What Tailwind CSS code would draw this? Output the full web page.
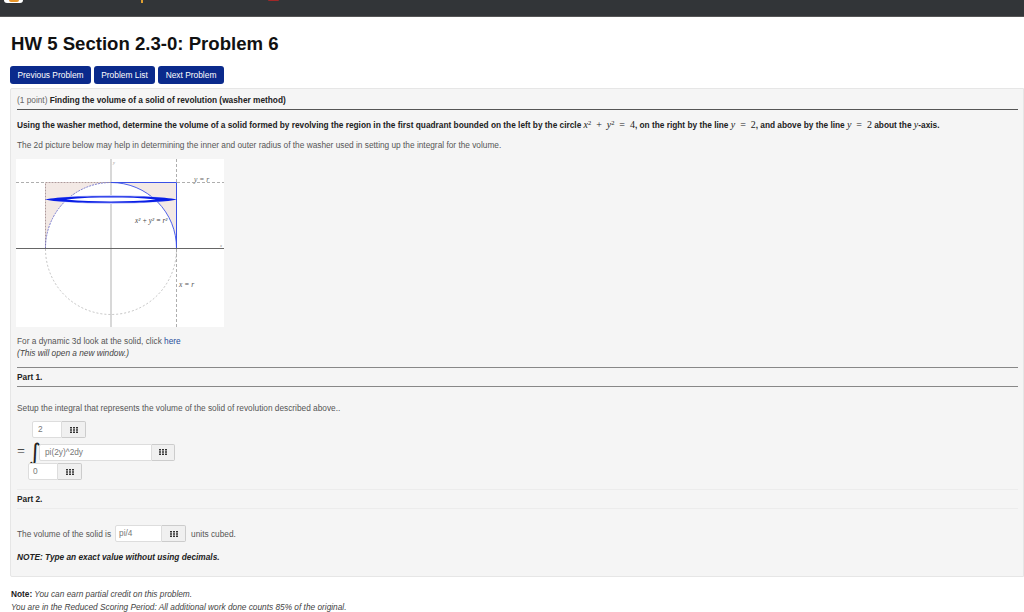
<!DOCTYPE html>
<html lang="en">
<head>
  <meta charset="UTF-8" />
  <title>HW 5 Section 2.3-0: Problem 6</title>
  <script src="https://cdn.jsdelivr.net/npm/@tailwindcss/browser@4"></script>
</head>
<body class="bg-white h-[612px] overflow-hidden font-['Liberation_Sans',Arial,sans-serif] text-[8.3px] leading-[12px] text-[#333]">
  <!-- Top bar -->
  <header class="relative h-[17px] bg-[#323538] border-b border-[#555]">
    <div class="absolute left-[4px] top-0 w-[19px] h-[3px] bg-white rounded-b-[5px]"><div class="mx-auto w-[10px] h-[2px] bg-[#e8962a] rounded-b-[4px]"></div></div>
    <div class="absolute left-[141px] top-0 w-[2px] h-[3px] bg-[#e0a030]"></div>
    <div class="absolute left-[268px] top-0 w-[11px] h-px bg-[#a02828] rounded-b"></div>
  </header>

  <main class="pl-[10px]">
    <h1 class="pt-[17px] pl-px text-[18.6px] leading-[20px] font-bold text-[#111]">HW 5 Section 2.3-0: Problem 6</h1>

    <nav class="mt-[12px] flex gap-[3px] text-white text-[8.4px]">
      <a class="flex items-center justify-center w-[81px] h-[18px] rounded-[3px] bg-[#0a2a8c]">Previous Problem</a>
      <a class="flex items-center justify-center w-[61px] h-[18px] rounded-[3px] bg-[#0a2a8c]">Problem List</a>
      <a class="flex items-center justify-center w-[66px] h-[18px] rounded-[3px] bg-[#0a2a8c]">Next Problem</a>
    </nav>

    <!-- Problem panel -->
    <section class="mt-[4px] h-[489px] bg-[#f5f5f5] border border-[#e6e6e6] rounded-l-[2px] pl-[6px] pr-[5px]">
      <div class="pt-[5px] h-[21px] border-b border-[#555] text-[#666]">(1 point) <b class="text-[#222]">Finding the volume of a solid of revolution (washer method)</b></div>

      <p class="mt-[9px] h-[12px] font-bold text-[#222] whitespace-nowrap">Using the washer method, determine the volume of a solid formed by revolving the region in the first quadrant bounded on the left by the circle <span class="font-['Liberation_Serif',serif] font-normal text-[10px] [word-spacing:2.4px]"><i>x</i><sup class="text-[6.5px]">2</sup> + <i>y</i><sup class="text-[6.5px]">2</sup> = 4</span>, on the right by the line <span class="font-['Liberation_Serif',serif] font-normal text-[10px] [word-spacing:2.4px]"><i>y</i> = 2</span>, and above by the line <span class="font-['Liberation_Serif',serif] font-normal text-[10px] [word-spacing:2.4px]"><i>y</i> = 2</span> about the <i class="font-['Liberation_Serif',serif] font-normal text-[10px]">y</i>-axis.</p>

      <p class="mt-[8px] text-[#555]">The 2d picture below may help in determining the inner and outer radius of the washer used in setting up the integral for the volume.</p>

      <!-- Washer diagram -->
      <svg class="mt-[8px] -ml-px block bg-white" width="208" height="168" viewBox="0 0 208 168">
        <path d="M29.5 23.5 H160.5 V89.5 A65.5 65.5 0 0 0 95 23.5 A65.5 65.5 0 0 0 29.5 89.5 Z" fill="#f3e9e5" />
        <path d="M95 0 V168" stroke="#d8d8d8" stroke-width="2" />
        <path d="M0 23.5 H29 M161 23.5 H208" stroke="#999" stroke-width="0.8" stroke-dasharray="3 2" fill="none" />
        <path d="M160.5 0 V24 M160.5 90 V168" stroke="#999" stroke-width="0.8" stroke-dasharray="3 2" fill="none" />
        <path d="M29.5 90 A65.5 65.5 0 0 0 160.5 90" stroke="#aaa" stroke-width="0.7" stroke-dasharray="2 2" fill="none" />
        <path d="M29.5 89.5 V23.5 H95" stroke="#a58f90" stroke-width="0.9" stroke-dasharray="2 1" fill="none" />
        <path d="M95 23.5 H160.5 V89.5" stroke="#3b50e6" stroke-width="1" fill="none" />
        <path d="M29.5 89.5 A65.5 65.5 0 0 1 95 23.5" stroke="#5a60c8" stroke-width="0.8" stroke-dasharray="2 1" fill="none" />
        <path d="M95 23.5 A65.5 65.5 0 0 1 160.5 89.5" stroke="#3b50e6" stroke-width="0.9" fill="none" />
        <path d="M0 89.5 H208" stroke="#666" stroke-width="1" />
        <!-- washer: thick ends, thin white lens in the middle -->
        <ellipse cx="95" cy="40.5" rx="58" ry="4.4" fill="#c9cdfb" />
        <path d="M29 40.5 C42 37.5 70 37.2 95 37.2 C120 37.2 148 37.5 161 40.5 C148 43.5 120 43.8 95 43.8 C70 43.8 42 43.5 29 40.5 Z" fill="#0a1fe6" />
        <path d="M50 40.5 C65 38.9 80 38.6 95 38.6 C110 38.6 125 38.9 140 40.5 C125 42.1 110 42.4 95 42.4 C80 42.4 65 42.1 50 40.5 Z" fill="#fff" />
        <text x="119" y="64" font-family="Liberation Serif, serif" font-style="italic" font-size="7.2" fill="#444">x² + y² = r²</text>
        <text x="178" y="23" font-family="Liberation Serif, serif" font-style="italic" font-size="7.5" fill="#666">y = r</text>
        <text x="163" y="128" font-family="Liberation Serif, serif" font-style="italic" font-size="7.5" fill="#555">x = r</text>
        <text x="204" y="88" font-family="Liberation Serif, serif" font-style="italic" font-size="4.5" fill="#888">x</text>
        <text x="97" y="5" font-family="Liberation Serif, serif" font-style="italic" font-size="4.5" fill="#888">y</text>
      </svg>

      <p class="mt-[8px] text-[#555]">For a dynamic 3d look at the solid, click <a class="text-[#1f4e9c]">here</a></p>
      <p class="italic text-[#444]">(This will open a new window.)</p>

      <div class="mt-[8px] h-[20px] border-y border-[#888] pt-[3px] font-bold text-[#222]">Part 1.</div>

      <p class="mt-[15px] text-[#555]">Setup the integral that represents the volume of the solid of revolution described above..</p>

      <!-- Integral with limits -->
      <div class="mt-[7px] flex flex-col w-[170px] h-[62px] text-[#777]">
        <div class="ml-[15px] flex h-[17px]">
          <span class="w-[30px] pl-[5px] bg-white border border-[#ddd] rounded-l-[2px] leading-[15px]">2</span>
          <span class="w-[24px] flex items-center justify-center bg-[#f0f0f0] border border-l-0 border-[#ccc] rounded-r-[2px]"><svg width="8" height="6" viewBox="0 0 8 6" fill="#333"><path d="M0 0h2v1.5H0zM3 0h2v1.5H3zM6 0h2v1.5H6zM0 2.2h2v1.5H0zM3 2.2h2v1.5H3zM6 2.2h2v1.5H6zM0 4.4h2V6H0zM3 4.4h2V6H3zM6 4.4h2V6H6z" /></svg></span>
        </div>
        <div class="flex items-center h-[20px] mt-[4px]">
          <span class="w-[12px] font-['Liberation_Serif',serif] text-[14px] text-[#222]">=</span>
          <span class="w-[10px] font-['DejaVu_Sans',sans-serif] italic text-[23px] leading-[20px] text-[#222]">∫</span>
          <div class="flex h-[17px]">
            <span class="w-[113px] pl-[5px] bg-white border border-[#ddd] rounded-l-[2px] leading-[15px]">pi(2y)^2dy</span>
            <span class="w-[23px] flex items-center justify-center bg-[#f0f0f0] border border-l-0 border-[#ccc] rounded-r-[2px]"><svg width="8" height="6" viewBox="0 0 8 6" fill="#333"><path d="M0 0h2v1.5H0zM3 0h2v1.5H3zM6 0h2v1.5H6zM0 2.2h2v1.5H0zM3 2.2h2v1.5H3zM6 2.2h2v1.5H6zM0 4.4h2V6H0zM3 4.4h2V6H3zM6 4.4h2V6H6z" /></svg></span>
          </div>
        </div>
        <div class="ml-[11px] mt-px flex h-[17px]">
          <span class="w-[30px] pl-[4px] bg-white border border-[#ddd] rounded-l-[2px] leading-[15px]">0</span>
          <span class="w-[24px] flex items-center justify-center bg-[#f0f0f0] border border-l-0 border-[#ccc] rounded-r-[2px]"><svg width="8" height="6" viewBox="0 0 8 6" fill="#333"><path d="M0 0h2v1.5H0zM3 0h2v1.5H3zM6 0h2v1.5H6zM0 2.2h2v1.5H0zM3 2.2h2v1.5H3zM6 2.2h2v1.5H6zM0 4.4h2V6H0zM3 4.4h2V6H3zM6 4.4h2V6H6z" /></svg></span>
        </div>
      </div>

      <div class="mt-[6px] h-[20px] border-y border-[#ececec] pt-[3px] font-bold text-[#222]">Part 2.</div>

      <div class="mt-[16px] flex items-center h-[17px] text-[#555]">
        <span class="mr-[4px]">The volume of the solid is</span>
        <span class="w-[47px] h-[17px] pl-[3px] bg-white border border-[#ddd] rounded-l-[2px] leading-[15px] text-[#777]">pi/4</span>
        <span class="w-[24px] h-[17px] flex items-center justify-center bg-[#f0f0f0] border border-l-0 border-[#ccc] rounded-r-[2px]"><svg width="8" height="6" viewBox="0 0 8 6" fill="#333"><path d="M0 0h2v1.5H0zM3 0h2v1.5H3zM6 0h2v1.5H6zM0 2.2h2v1.5H0zM3 2.2h2v1.5H3zM6 2.2h2v1.5H6zM0 4.4h2V6H0zM3 4.4h2V6H3zM6 4.4h2V6H6z" /></svg></span>
        <span class="ml-[5px]">units cubed.</span>
      </div>

      <p class="mt-[9px] font-bold italic text-[#222]">NOTE: Type an exact value without using decimals.</p>
    </section>

    <footer class="pt-[11px] pl-px text-[#444] italic">
      <p><b class="not-italic text-[#222]">Note:</b> You can earn partial credit on this problem.</p>
      <p class="mt-px">You are in the Reduced Scoring Period: All additional work done counts 85% of the original.</p>
    </footer>
  </main>
</body>
</html>
